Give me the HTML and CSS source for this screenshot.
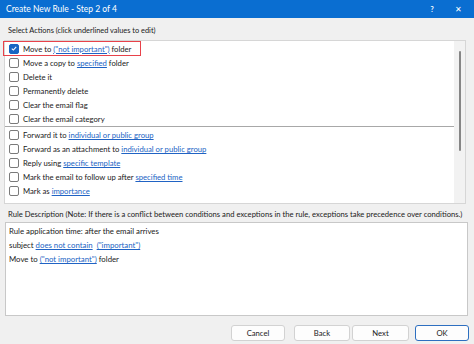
FILE: index.html
```html
<!DOCTYPE html>
<html lang="en">
<head>
    <meta charset="UTF-8">
    <title>Create New Rule - Step 2 of 4</title>
    <link rel="stylesheet" href="styles.css">
</head>
<body>
    <div class="dialog">
        <div class="title-bar">
            <span class="title">Create New Rule - Step 2 of 4</span>
            <span class="title-btn help">?</span>
            <span class="title-btn close">&#x2715;</span>
        </div>
        <div class="content">
            <div class="label">Select Actions (click underlined values to edit)</div>
            <div class="action-box">
                <div class="action-list">
                    <div class="group">
                        <div class="row selected"><span class="check checked"><svg width="9" height="9" viewBox="0 0 9 9"><path d="M2 4.6 L3.8 6.3 L7 2.6" fill="none" stroke="#fff" stroke-width="1.2"/></svg></span>Move to&nbsp;<a>("not important")</a>&nbsp;folder</div>
                        <div class="row"><span class="check"></span>Move a copy to&nbsp;<a>specified</a>&nbsp;folder</div>
                        <div class="row"><span class="check"></span>Delete it</div>
                        <div class="row"><span class="check"></span>Permanently delete</div>
                        <div class="row"><span class="check"></span>Clear the email flag</div>
                        <div class="row"><span class="check"></span>Clear the email category</div>
                    </div>
                    <div class="group">
                        <div class="row"><span class="check"></span>Forward it to&nbsp;<a>individual or public group</a></div>
                        <div class="row"><span class="check"></span>Forward as an attachment to&nbsp;<a>individual or public group</a></div>
                        <div class="row"><span class="check"></span>Reply using&nbsp;<a>specific template</a></div>
                        <div class="row"><span class="check"></span>Mark the email to follow up after&nbsp;<a>specified time</a></div>
                        <div class="row"><span class="check"></span>Mark as&nbsp;<a>importance</a></div>
                    </div>
                </div>
                <div class="scrollbar"><div class="thumb"></div></div>
            </div>
            <div class="desc-label">Rule Description (Note: If there is a conflict between conditions and exceptions in the rule, exceptions take precedence over conditions.)</div>
            <div class="desc-box">
                <div>Rule application time: after the email arrives</div>
                <div>subject <a>does not contain</a> &nbsp;<a>("important")</a></div>
                <div>Move to <a>("not important")</a> folder</div>
            </div>
            <div class="buttons">
                <button class="btn cancel">Cancel</button>
                <button class="btn back">Back</button>
                <button class="btn next">Next</button>
                <button class="btn primary">OK</button>
            </div>
        </div>
    </div>
</body>
</html>
```

FILE: styles.css
```css
body {
    margin: 0;
    padding: 0;
    background-color: #f0f0f0;
    font-family: Lato, "Noto Sans", sans-serif;
    font-size: 7.7px;
    color: #1a1a1a;
    overflow: hidden;
}

.dialog {
    width: 474px;
    height: 344px;
    display: flex;
    flex-direction: column;
}

.title-bar {
    height: 18px;
    background-color: #0a6ed1;
    color: #fff;
    display: flex;
    align-items: center;
    padding-left: 6px;
    font-size: 8.5px;
}

.title {
    flex: 1;
}

.title-btn {
    width: 20px;
    text-align: center;
    font-size: 8px;
}

.help {
    margin-right: 6px;
    font-weight: bold;
    font-size: 7px;
}

.close {
    margin-right: 6px;
}

.content {
    padding: 0 8px 0 4px;
    display: flex;
    flex-direction: column;
}

.label {
    height: 14px;
    line-height: 14px;
    margin: 6px 0 2px 4px;
    font-size: 7.4px;
}

.action-box {
    height: 162px;
    background-color: #fff;
    border: 1px solid #d6d6d6;
    display: flex;
}

.action-list {
    flex: 1;
    padding-top: 1px;
}

.group + .group {
    border-top: 1px solid #a8a8a8;
    padding-top: 1px;
}

.row {
    height: 14px;
    display: flex;
    align-items: center;
    padding-left: 4px;
    white-space: nowrap;
}

.row.selected {
    margin-left: -2px;
    padding-left: 5px;
    width: 131px;
    border: 1px solid #e8424a;
    height: 13px;
    margin-top: -1px;
}

.check {
    width: 8px;
    height: 8px;
    border: 1px solid #7a7a7a;
    border-radius: 2px;
    margin-right: 4px;
    display: flex;
    align-items: center;
    justify-content: center;
    background-color: #fff;
}

.check.checked {
    background-color: #1765c3;
    border-color: #1765c3;
}

a {
    color: #2063c4;
    text-decoration: underline;
}

.scrollbar {
    width: 11px;
    background-color: #f2f2f2;
    display: flex;
    justify-content: center;
    padding: 10px 0;
}

.thumb {
    width: 2px;
    height: 100px;
    background-color: #868686;
    border-radius: 1px;
}

.desc-label {
    height: 12px;
    line-height: 12px;
    margin: 4px 0 2px 4px;
    font-size: 7.65px;
    white-space: nowrap;
}

.desc-box {
    height: 90px;
    margin-left: 1px;
    margin-right: -2px;
    background-color: #fff;
    border: 1px solid #c8c8c8;
    padding: 1px 3px;
    line-height: 14px;
    font-size: 7.8px;
}

.buttons {
    display: flex;
    justify-content: flex-end;
    margin-top: 9px;
    margin-right: -3px;
}

.btn {
    width: 54px;
    height: 16px;
    font-family: Lato, "Noto Sans", sans-serif;
    font-size: 7.7px;
    background-color: #fdfdfd;
    border: 1px solid #d2d2d2;
    border-radius: 3px;
    padding: 0;
    color: #1a1a1a;
}

.btn.back {
    width: 56px;
    margin-left: 9px;
}

.btn.next {
    width: 57px;
    margin-left: 2px;
}

.btn.primary {
    border: 1px solid #2d6fc0;
    margin-left: 6px;
}
```
